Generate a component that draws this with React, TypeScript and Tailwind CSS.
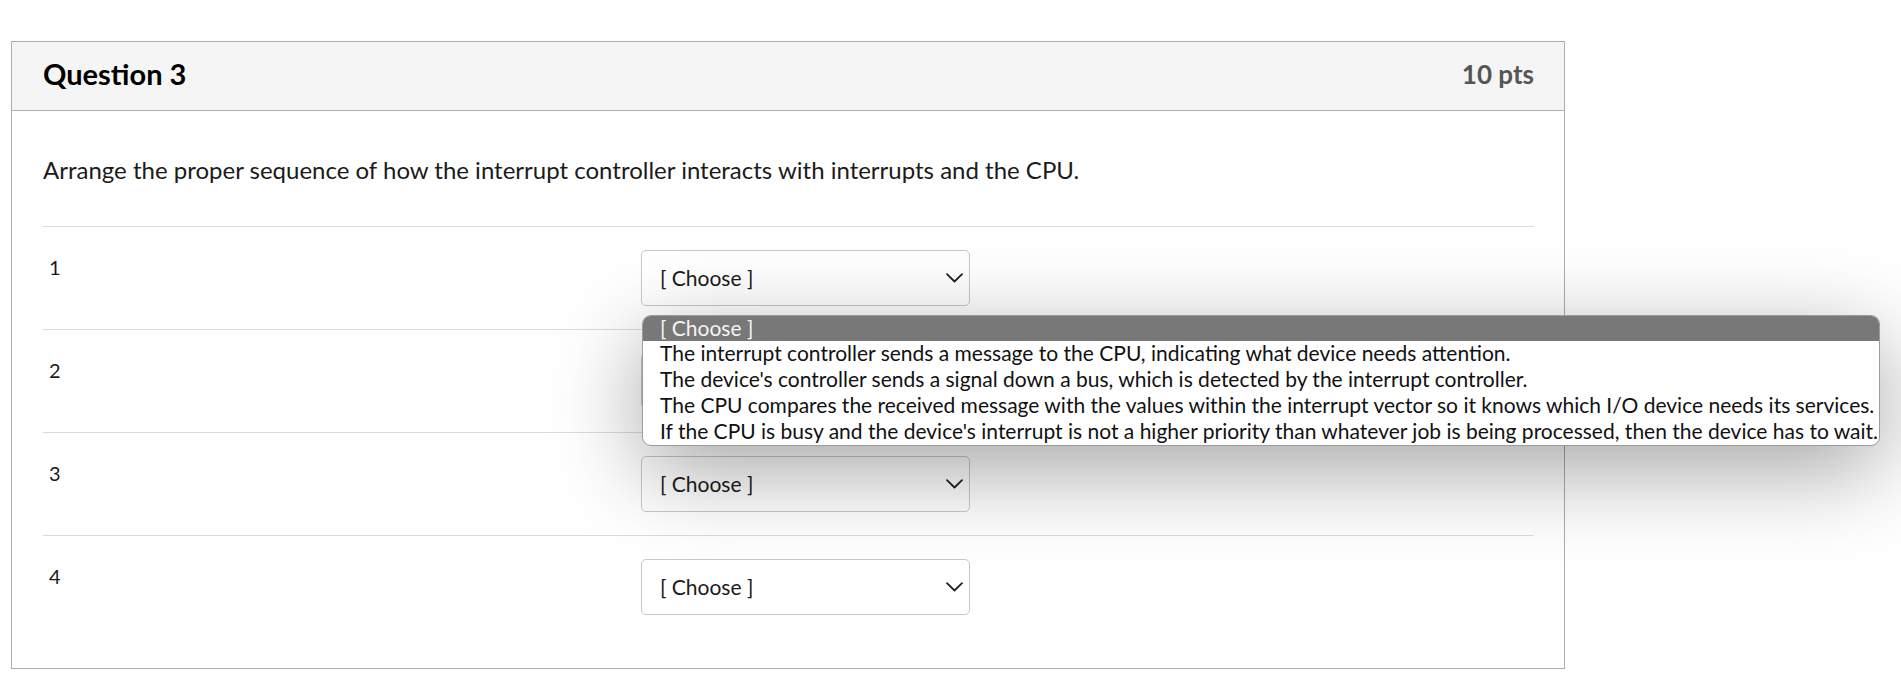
import React from 'react';

const options = [
  "The interrupt controller sends a message to the CPU, indicating what device needs attention.",
  "The device's controller sends a signal down a bus, which is detected by the interrupt controller.",
  "The CPU compares the received message with the values within the interrupt vector so it knows which I/O device needs its services.",
  "If the CPU is busy and the device's interrupt is not a higher priority than whatever job is being processed, then the device has to wait.",
];

const Chevron = () => (
  <svg width="17" height="10" viewBox="0 0 17 10" fill="none" aria-hidden="true">
    <polyline points="1,1.2 8.5,8.5 16,1.2" stroke="#222" strokeWidth="1.8" strokeLinecap="round" strokeLinejoin="round" />
  </svg>
);

const ChooseBox: React.FC<{ open?: boolean }> = ({ open }) => (
  <div className="relative">
    <div className="flex h-[56px] w-[329px] items-center justify-between rounded-[5px] border border-[#c8c8c8] bg-white pl-[18px] pr-[6px] text-[21px] text-[#1b1b1b]">
      <span>[ Choose ]</span>
      <Chevron />
    </div>
    {/* native select popup, drawn open */}
    {open && (
      <div className="absolute left-[1px] top-[65px] z-10 w-[1238px] overflow-hidden rounded-[9px] border border-[#9c9c9c] bg-white text-[21px] text-[#111] shadow-[0_24px_90px_rgba(0,0,0,0.36)]">
        <div className="h-[25px] bg-[#787878] pl-[17px] leading-[23px] text-[#f4f4f4]">[ Choose ]</div>
        {options.map((o) => (
          <div key={o} className="h-[26px] whitespace-nowrap pl-[17px] leading-[24px]">
            {o}
          </div>
        ))}
      </div>
    )}
  </div>
);

export default function App() {
  return (
    <div className="min-h-screen bg-white pl-[11px] pt-[41px] font-['Lato','Liberation_Sans',sans-serif]">
      <div className="w-[1554px] border border-[#adadad]">
        {/* Header */}
        <div className="flex h-[69px] items-center justify-between border-b border-[#adadad] bg-[#f5f5f5] pb-[4px] pl-[31px] pr-[30px]">
          <h2 className="text-[29px] font-bold text-black">Question 3</h2>
          <span className="text-[26px] font-bold text-[#555]">10 pts</span>
        </div>

        {/* Body */}
        <div className="pl-[31px] pr-[30px] pb-[30px]">
          <p className="mt-[41px] mb-[38px] h-[36px] text-[24px] leading-[36px] text-[#1b1b1b]">
            Arrange the proper sequence of how the interrupt controller interacts with interrupts and the CPU.
          </p>

          {[1, 2, 3, 4].map((n) => (
            <div key={n} className="flex border-t border-[#dcdcdc] pt-[23px] pb-[23px]">
              <div className="w-[598px] pl-[6px] pt-[2px] text-[20px] leading-[30px] text-[#1b1b1b]">{n}</div>
              <ChooseBox open={n === 1} />
            </div>
          ))}
        </div>
      </div>
    </div>
  );
}
